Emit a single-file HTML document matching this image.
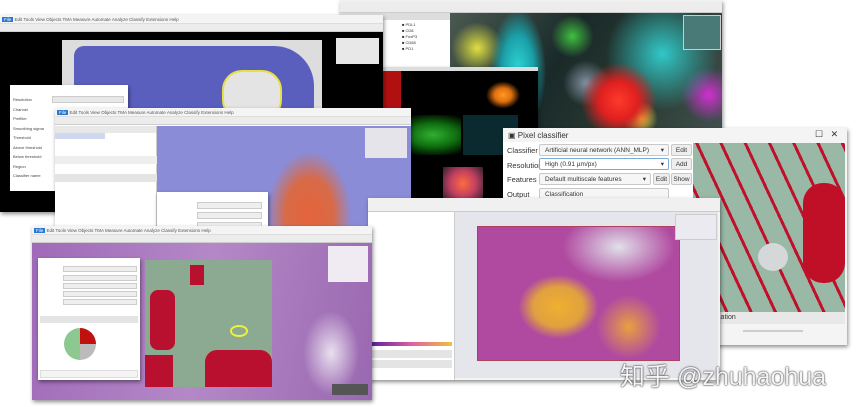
<!DOCTYPE html>
<html><head><meta charset="utf-8"><style>
*{margin:0;padding:0;box-sizing:border-box}
body{width:859px;height:407px;background:#fff;position:relative;overflow:hidden;font-family:"Liberation Sans",sans-serif;font-size:6px;color:#333}
.a{position:absolute}
.menu{background:#f4f4f4;border-bottom:1px solid #ddd;height:9px;font-size:4.5px;color:#555;padding-left:2px;white-space:nowrap;line-height:9px}
.menu b{background:#2a78d0;color:#fff;padding:0 2px;font-weight:normal}
.tb{background:#ececec;height:8px;border-bottom:1px solid #ccc}
.sh{box-shadow:1px 2px 4px rgba(0,0,0,.45)}
.row{position:absolute;left:4px;font-size:7.5px;color:#333}
.box{position:absolute;background:#f6f6f6;border:1px solid #c8c8c8;border-radius:2px;padding-left:5px}
.btn{position:absolute;background:#eee;border:1px solid #c8c8c8;border-radius:2px;text-align:center}
</style></head><body>

<!-- top-right fluorescence window -->
<div class="a sh" style="left:340px;top:0;width:382px;height:200px;background:#f0f0f0">
  <div class="tb" style="position:absolute;left:0;top:2px;width:382px;height:11px"></div>
  <div class="a" style="left:0;top:13px;width:112px;height:60px;background:#fff;border-right:1px solid #ccc">
    <div style="background:#ddd;height:7px"></div>
    <div style="font-size:4px;line-height:6px;padding:2px 0 0 62px;color:#333">■ PDL1<br>■ CD8<br>■ FoxP3<br>■ CD68<br>■ PD1</div>
  </div>
  <div class="a" style="left:110px;top:13px;width:272px;height:117px;background:radial-gradient(circle at 62% 75%,#ff3a2a 0,#e02020 10%,transparent 20%),radial-gradient(circle at 70% 90%,#ffe040 0,transparent 8%),radial-gradient(ellipse 40px 90px at 25% 50%,#30d8d8 0,#1aa0a8 40%,transparent 70%),radial-gradient(circle at 78% 35%,#30c8c8 0,transparent 25%),radial-gradient(circle at 10% 30%,#e0e040 0,transparent 10%),radial-gradient(circle at 45% 20%,#40c040 0,transparent 12%),radial-gradient(circle at 95% 70%,#d030d0 0,transparent 10%),radial-gradient(circle at 50% 60%,#8090a0 0,transparent 15%),linear-gradient(120deg,#4a5a50,#1a2a2a 40%,#2a3a30 70%,#405050)"></div>
</div>
<div class="a" style="left:683px;top:15px;width:38px;height:35px;background:#4a7a78;border:1px solid #ccc"></div>
<div class="a sh" style="left:383px;top:67px;width:155px;height:133px;background:#000">
  <div style="background:#ddd;height:4px"></div>
  <div class="a" style="left:0;top:4px;width:18px;height:40px;background:#b01010"></div>
  <div class="a" style="left:100px;top:12px;width:40px;height:32px;background:radial-gradient(ellipse at center,#ff9a20 0,#e07010 30%,#000 60%)"></div>
  <div class="a" style="left:8px;top:48px;width:70px;height:40px;background:radial-gradient(ellipse at 60% 50%,#30b030 0,#107010 40%,#000 80%)"></div>
  <div class="a" style="left:80px;top:48px;width:55px;height:40px;background:#0a2a30"></div>
  <div class="a" style="left:60px;top:100px;width:40px;height:33px;background:radial-gradient(circle,#ff6a40 0,#c04060 50%,#302030)"></div>
</div>

<!-- window 1 -->
<div class="a sh" style="left:0;top:15px;width:383px;height:197px;background:#000">
  <div class="menu"><b>File</b> Edit Tools View Objects TMA Measure Automate Analyze Classify Extensions Help</div>
  <div class="tb"></div>
  <div class="a" style="left:62px;top:25px;width:260px;height:90px;background:#ddd">
    <div class="a" style="left:12px;top:6px;width:240px;height:80px;background:#5a5fbe;border-radius:10px 40px 20px 8px"></div>
    <div class="a" style="left:160px;top:30px;width:60px;height:50px;background:#e4e4e4;border:2px solid #e8e040;border-radius:20px"></div>
  </div>
  <div class="a" style="left:336px;top:23px;width:43px;height:26px;background:#e8e8e8"></div>
</div>
<div class="a sh" style="left:10px;top:85px;width:118px;height:106px;background:#fff;font-size:4px;line-height:9.5px;padding:10px 0 0 3px;color:#444">
  Resolution<br>Channel<br>Prefilter<br>Smoothing sigma<br>Threshold<br>Above threshold<br>Below threshold<br>Region<br>Classifier name
  <div class="a" style="left:42px;top:11px;width:72px;height:7px;background:#e8e8e8;border:1px solid #ccc"></div>
</div>

<!-- window 2 -->
<div class="a sh" style="left:55px;top:108px;width:356px;height:195px;background:#fff">
  <div class="menu"><b>File</b> Edit Tools View Objects TMA Measure Automate Analyze Classify Extensions Help</div>
  <div class="tb"></div>
  <div class="a" style="left:0;top:18px;width:102px;height:177px;background:#fff;border-right:1px solid #ccc">
    <div style="background:#e8e8e8;height:7px"></div>
    <div style="background:#d0d8f0;height:6px;width:50px"></div>
    <div class="a" style="left:0;top:30px;width:102px;height:8px;background:#eee"></div>
    <div class="a" style="left:0;top:48px;width:102px;height:8px;background:#e4e4e4"></div>
  </div>
  <div class="a" style="left:102px;top:18px;width:254px;height:177px;background:radial-gradient(ellipse 60px 90px at 60% 50%,#e4643c 0,#d86a48 40%,transparent 70%),radial-gradient(ellipse 40px 50px at 90% 80%,#e06040 0,transparent 70%),#8a8cd8"></div>
  <div class="a" style="left:310px;top:20px;width:42px;height:30px;background:#e4e4ea"></div>
</div>
<div class="a sh" style="left:157px;top:192px;width:111px;height:60px;background:#fff">
  <div class="a" style="left:40px;top:10px;width:65px;height:7px;background:#eee;border:1px solid #ccc"></div>
  <div class="a" style="left:40px;top:20px;width:65px;height:7px;background:#eee;border:1px solid #ccc"></div>
  <div class="a" style="left:40px;top:30px;width:65px;height:7px;background:#eee;border:1px solid #ccc"></div>
</div>

<!-- pixel classifier -->
<div class="a sh" style="left:503px;top:128px;width:344px;height:217px;background:#f4f4f4">
  <div class="a" style="left:5px;top:3px;font-size:8px;color:#333">▣ Pixel classifier</div>
  <div class="a" style="left:312px;top:1px;font-size:9px">☐ &nbsp; ✕</div>
  <div class="a" style="left:0;top:14px;width:190px;height:60px;background:#fff">
    <div class="row" style="top:4px">Classifier</div>
    <div class="row" style="top:19px">Resolution</div>
    <div class="row" style="top:33px">Features</div>
    <div class="row" style="top:48px">Output</div>
    <div class="box" style="left:36px;top:2px;width:130px;height:12px;line-height:11px;font-size:6.5px">Artificial neural network (ANN_MLP) <span style="float:right;margin-right:4px">▾</span></div>
    <div class="box" style="left:36px;top:16px;width:130px;height:12px;line-height:11px;font-size:6.5px;background:#fff;border-color:#7aaad8">High (0.91 µm/px) <span style="float:right;margin-right:4px">▾</span></div>
    <div class="box" style="left:36px;top:31px;width:112px;height:12px;line-height:11px;font-size:6.5px">Default multiscale features <span style="float:right;margin-right:4px">▾</span></div>
    <div class="box" style="left:36px;top:46px;width:130px;height:12px;line-height:11px;font-size:6.5px">Classification</div>
    <div class="btn" style="left:168px;top:2px;width:21px;height:12px;line-height:11px;font-size:6.5px">Edit</div>
    <div class="btn" style="left:168px;top:16px;width:21px;height:12px;line-height:11px;font-size:6.5px">Add</div>
    <div class="btn" style="left:150px;top:31px;width:17px;height:12px;line-height:11px;font-size:6.5px">Edit</div>
    <div class="btn" style="left:168px;top:31px;width:21px;height:12px;line-height:11px;font-size:6.5px">Show</div>
  </div>
  <div class="a" style="left:190px;top:15px;width:152px;height:169px;background:#9ab8a6;overflow:hidden">
    <div class="a" style="left:-20px;top:0;width:200px;height:180px;background:repeating-linear-gradient(65deg,transparent 0 8px,#c0102a 8px 11px,transparent 11px 22px),repeating-linear-gradient(-20deg,transparent 0 14px,rgba(154,184,166,.9) 14px 20px)"></div>
    <div class="a" style="left:110px;top:40px;width:42px;height:100px;background:#c01028;border-radius:20px"></div>
    <div class="a" style="left:65px;top:100px;width:30px;height:28px;background:#d4d8d8;border-radius:50%"></div>
  </div>
  <div class="a" style="left:190px;top:184px;width:152px;height:12px;background:#e8e8e8;font-size:7px;line-height:12px;padding-left:12px">ssification</div>
  <div class="a" style="left:240px;top:202px;width:60px;height:2px;background:#ccc"></div>
</div>

<!-- window 3 IHC (on top of pixel classifier) -->
<div class="a sh" style="left:368px;top:198px;width:352px;height:182px;background:#f4f4f4">
  <div class="tb" style="height:14px;background:#f0f0f0"></div>
  <div class="a" style="left:0;top:14px;width:87px;height:168px;background:#fff;border-right:1px solid #ccc">
    <div class="a" style="left:4px;top:130px;width:80px;height:4px;background:linear-gradient(90deg,#6020a0,#e060a0,#f0c040)"></div>
    <div class="a" style="left:4px;top:138px;width:80px;height:8px;background:#e4e4e4"></div>
    <div class="a" style="left:4px;top:148px;width:80px;height:8px;background:#e4e4e4"></div>
  </div>
  <div class="a" style="left:87px;top:14px;width:263px;height:166px;background:#e4e6ec">
    <div class="a" style="left:22px;top:14px;width:203px;height:135px;border:1px solid #b04060;background:radial-gradient(ellipse 50px 40px at 40% 60%,#f0b030 0,#e0a040 50%,transparent 80%),radial-gradient(ellipse 40px 40px at 75% 75%,#e8a040 0,transparent 80%),radial-gradient(ellipse 80px 50px at 70% 15%,#e0e0ea 0,transparent 70%),#b04aa0"></div>
    <div class="a" style="left:220px;top:2px;width:42px;height:26px;background:#eaeaf0;border:1px solid #ccc"></div>
  </div>
</div>

<!-- window 4 H&E -->
<div class="a sh" style="left:32px;top:226px;width:340px;height:174px;background:#b07cc0">
  <div class="menu"><b>File</b> Edit Tools View Objects TMA Measure Automate Analyze Classify Extensions Help</div>
  <div class="tb"></div>
  <div class="a" style="left:0;top:17px;width:340px;height:157px;background:radial-gradient(ellipse 40px 60px at 88% 70%,#e8e0ee 0,transparent 70%),linear-gradient(100deg,#a06ab8,#b488c8 50%,#9a68b0)"></div>
  <div class="a" style="left:113px;top:34px;width:127px;height:127px;background:#8caa92">
    <div class="a" style="left:5px;top:30px;width:25px;height:60px;background:#b8102e;border-radius:8px"></div>
    <div class="a" style="left:60px;top:90px;width:67px;height:37px;background:#b8102e;border-radius:12px 12px 0 0"></div>
    <div class="a" style="left:0;top:95px;width:28px;height:32px;background:#b8102e"></div>
    <div class="a" style="left:45px;top:5px;width:14px;height:20px;background:#b8102e"></div>
    <div class="a" style="left:85px;top:65px;width:18px;height:12px;border:2px solid #f0f040;border-radius:50%"></div>
  </div>
  <div class="a" style="left:296px;top:20px;width:40px;height:36px;background:#f0eaf2"></div>
  <div class="a" style="left:300px;top:158px;width:36px;height:11px;background:#555"></div>
</div>
<div class="a sh" style="left:38px;top:258px;width:102px;height:122px;background:#fff">
  <div class="a" style="left:25px;top:8px;width:74px;height:6px;background:#eee;border:1px solid #ccc"></div>
  <div class="a" style="left:25px;top:17px;width:74px;height:6px;background:#eee;border:1px solid #ccc"></div>
  <div class="a" style="left:25px;top:25px;width:74px;height:6px;background:#eee;border:1px solid #ccc"></div>
  <div class="a" style="left:25px;top:33px;width:74px;height:6px;background:#eee;border:1px solid #ccc"></div>
  <div class="a" style="left:25px;top:41px;width:74px;height:6px;background:#eee;border:1px solid #ccc"></div>
  <div class="a" style="left:2px;top:58px;width:98px;height:7px;background:#e4e4e4"></div>
  <div class="a" style="left:26px;top:70px;width:32px;height:32px;border-radius:50%;background:conic-gradient(#c01010 0 25%,#bbb 25% 50%,#8cc890 50% 100%)"></div>
  <div class="a" style="left:2px;top:112px;width:98px;height:8px;background:#f4f4f4;border:1px solid #ddd"></div>
</div>

<div class="a" style="left:620px;top:357px;font-family:'Liberation Sans','Noto Sans CJK SC',sans-serif;font-size:25px;color:#f4f4f4;text-shadow:0 0 2px #444,0 0 1px #222">知乎 @zhuhaohua</div>
</body></html>
